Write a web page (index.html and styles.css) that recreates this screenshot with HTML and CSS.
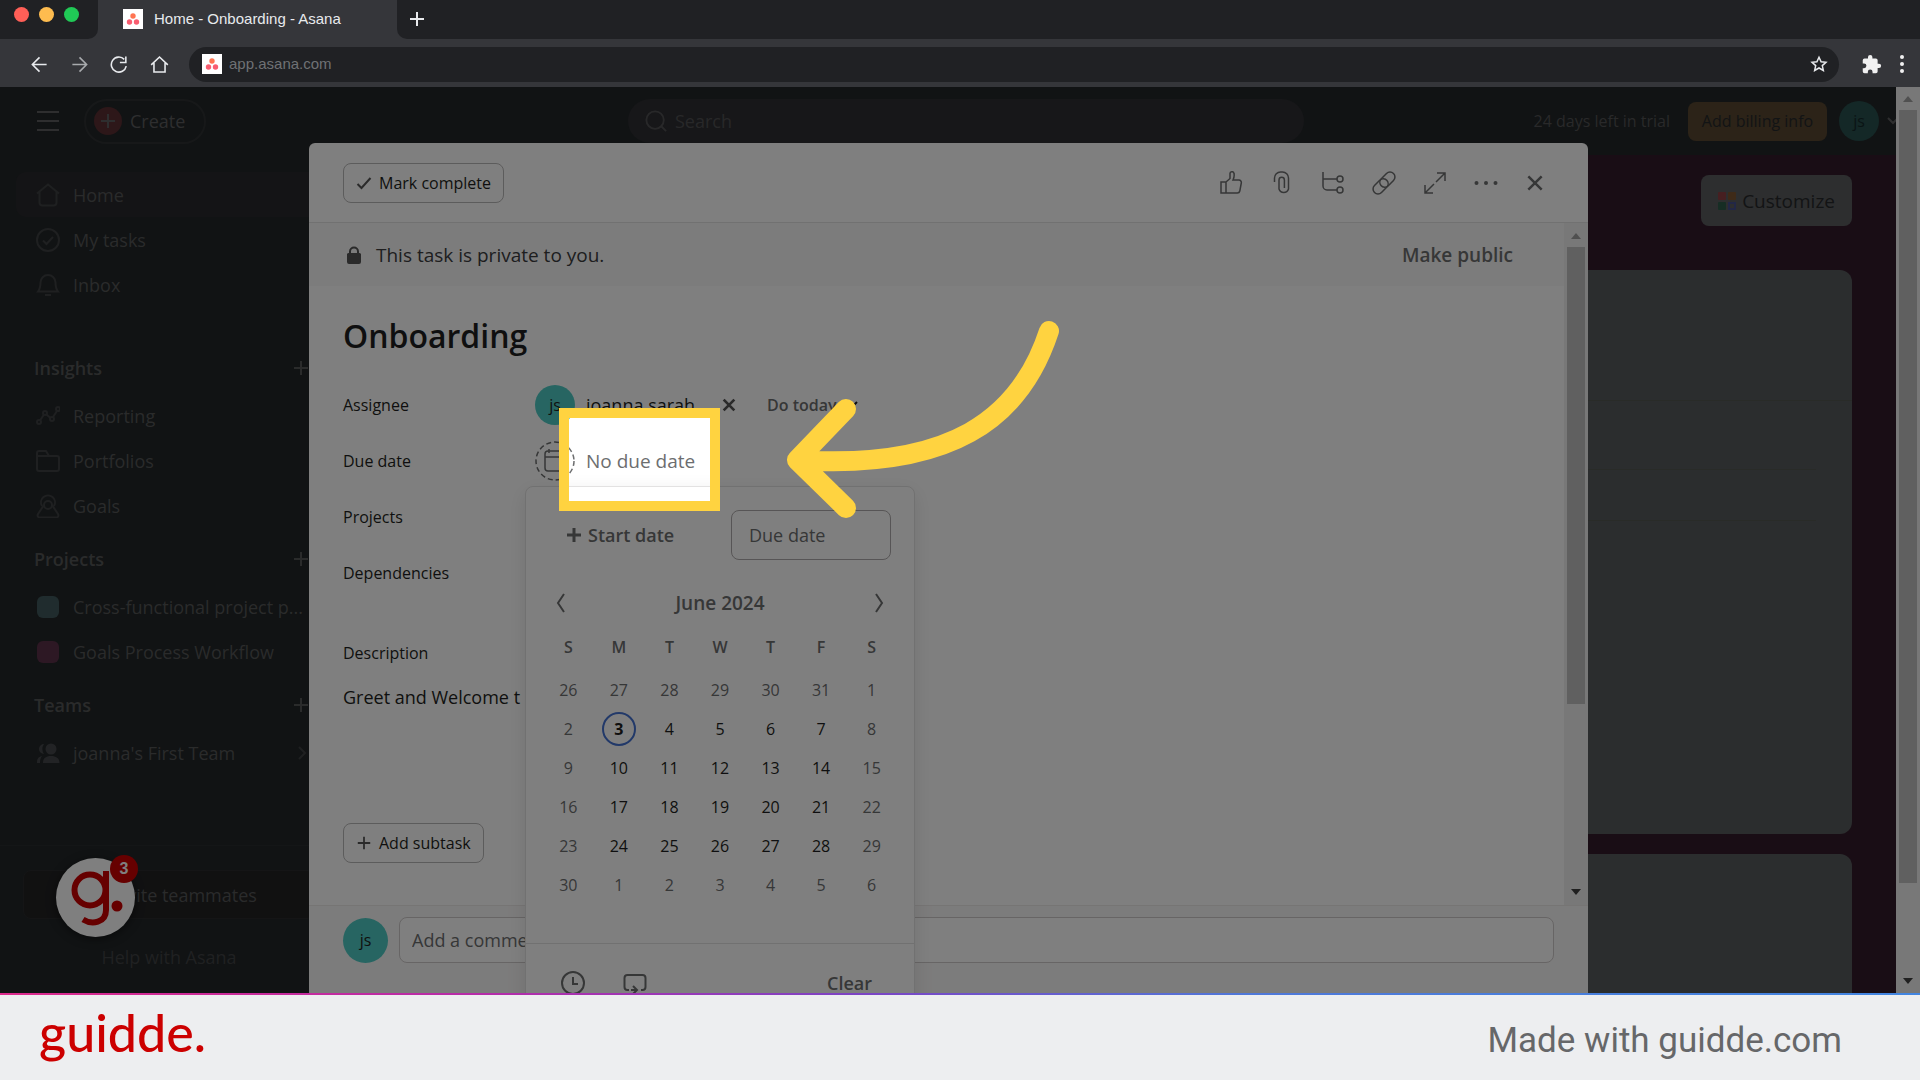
FILE: index.html
```html
<!DOCTYPE html>
<html lang="en">
<head>
  <meta charset="UTF-8">
  <meta name="viewport" content="width=device-width, initial-scale=1.0">
  <title>Home - Onboarding - Asana</title>
  <link rel="stylesheet" href="styles.css">
</head>
<body>
  <svg class="defs" aria-hidden="true">
    <symbol id="asana" viewBox="0 0 20 20">
      <rect width="20" height="20" fill="#fff"/>
      <circle cx="10" cy="7" r="2.7" fill="#ff7452"/>
      <circle cx="6.5" cy="13" r="2.7" fill="#f95d70"/>
      <circle cx="13.5" cy="13" r="2.7" fill="#f95d70"/>
    </symbol>
    <symbol id="plus" viewBox="3 3 18 18"><path d="M12 5v14M5 12h14"/></symbol>
    <symbol id="cross" viewBox="0 0 24 24"><path d="M4 4l16 16M20 4L4 20"/></symbol>
  </svg>

  <div class="tabs">
    <div class="tabs-left"><i class="light red"></i><i class="light yellow"></i><i class="light green"></i></div>
    <div class="tab"><svg class="favicon"><use href="#asana"/></svg><span>Home - Onboarding - Asana</span></div>
    <div class="tabs-right"><svg class="icon new-tab"><use href="#plus"/></svg></div>
  </div>

  <nav class="toolbar">
    <svg class="icon nav" viewBox="0 0 24 24"><path d="M21 12H4M12 3l-9 9 9 9"/></svg>
    <svg class="icon nav forward" viewBox="0 0 24 24"><path d="M3 12h17M12 3l9 9-9 9"/></svg>
    <svg class="icon nav" viewBox="0 0 24 24"><path d="M18 5.500A9.500 9.500 0 1 0 20.500 14M20 2v7.500h-7.500"/></svg>
    <svg class="icon nav" viewBox="0 0 24 24"><path d="M1.500 12.500L12 2.500l10.500 10M5 10v11.500h14V10"/></svg>
    <div class="address">
      <svg class="favicon"><use href="#asana"/></svg>
      <span>app.asana.com</span>
      <svg class="icon star" viewBox="0 0 24 24"><path d="M12 3l2.800 6 6.500.7-4.900 4.400 1.400 6.500L12 17.300l-5.800 3.300 1.400-6.500-4.900-4.400 6.500-.7z"/></svg>
    </div>
    <svg class="puzzle" viewBox="0 0 24 24"><path d="M20.500 11H19V7a2 2 0 0 0-2-2h-4V3.500a2.500 2.500 0 0 0-5 0V5H4a2 2 0 0 0-2 2v3.800h1.500a2.700 2.700 0 0 1 0 5.400H2V20a2 2 0 0 0 2 2h3.800v-1.500a2.700 2.700 0 0 1 5.400 0V22H17a2 2 0 0 0 2-2v-4h1.500a2.500 2.500 0 0 0 0-5z"/></svg>
    <svg class="dots" viewBox="0 0 6 20"><circle cx="3" cy="3" r="2"/><circle cx="3" cy="10" r="2"/><circle cx="3" cy="17" r="2"/></svg>
  </nav>

  <main class="page">
    <div class="app">
      <header class="topbar">
        <svg class="icon menu" viewBox="0 0 24 24"><path d="M1 3h22M1 12h22M1 21h22"/></svg>
        <button class="create"><span class="create-dot"><svg class="icon"><use href="#plus"/></svg></span>Create</button>
        <div class="search">
          <svg class="icon" viewBox="0 0 24 24"><circle cx="11" cy="11" r="9.500"/><path d="M18 18l5 5"/></svg>
          <input type="text" placeholder="Search" aria-label="Search">
        </div>
        <span class="trial">24 days left in trial</span>
        <button class="billing">Add billing info</button>
        <span class="avatar avatar-top">js</span>
        <svg class="icon caret" viewBox="0 0 14 14"><path d="M2 4l5 5 5-5"/></svg>
      </header>

      <div class="columns">
        <nav class="sidebar">
          <a class="item active" href="#"><svg class="icon" viewBox="0 0 24 24"><path d="M1 10.500L12 1.500l11 9M3.500 9v10.500a3 3 0 0 0 3 3h11a3 3 0 0 0 3-3V9"/></svg>Home</a>
          <a class="item" href="#"><svg class="icon" viewBox="0 0 24 24"><circle cx="12" cy="12" r="11"/><path d="M7 12.500l3.500 3.500 6.500-7"/></svg>My tasks</a>
          <a class="item" href="#"><svg class="icon" viewBox="0 0 24 24"><path d="M2 18.500c2-2.500 2.500-5 2.500-9a7.500 7.500 0 0 1 15 0c0 4 .5 6.500 2.500 9zM9 22h6"/></svg>Inbox</a>

          <div class="section first">Insights<svg class="icon add"><use href="#plus"/></svg></div>
          <a class="item" href="#"><svg class="icon" viewBox="0 0 24 24"><circle cx="3" cy="18" r="2"/><circle cx="9" cy="9" r="2"/><circle cx="16" cy="15" r="2"/><circle cx="22" cy="5" r="2"/><path d="M4 16.500l4-6M10.500 10.500l4 3.500M17 13l4-6"/></svg>Reporting</a>
          <a class="item" href="#"><svg class="icon" viewBox="0 0 24 24"><path d="M1 20V4a2 2 0 0 1 2-2h7l3 5h8a2 2 0 0 1 2 2v11a2 2 0 0 1-2 2H3a2 2 0 0 1-2-2zM1 7h12"/></svg>Portfolios</a>
          <a class="item" href="#"><svg class="icon" viewBox="0 0 24 24"><path d="M6 12a7 7 0 1 1 12 0"/><path d="M8 11a4 4 0 0 1 8 0l6 9c1 2 0 3.500-2 3.500H4c-2 0-3-1.500-2-3.500z"/><path d="M8 11a4 4 0 0 0 8 0"/></svg>Goals</a>

          <div class="section">Projects<svg class="icon add"><use href="#plus"/></svg></div>
          <a class="item" href="#"><i class="swatch teal"></i>Cross-functional project p...</a>
          <a class="item" href="#"><i class="swatch pink"></i>Goals Process Workflow</a>

          <div class="section">Teams<svg class="icon add"><use href="#plus"/></svg></div>
          <a class="item" href="#"><svg class="people" viewBox="0 0 24 24"><circle cx="15" cy="8" r="5.500"/><path d="M7 22c0-5 3-7 8-7s8.500 2 8.500 7zM8 3a5 5 0 0 0 0 10 9 9 0 0 1 0-10zM1 22c0-4 1-6 5-7-1.500 2-2 4-2 7z"/></svg>joanna's First Team<svg class="icon arrow" viewBox="0 0 14 14"><path d="M4 1l6 6-6 6"/></svg></a>

          <div class="sidebar-foot">
            <button class="invite"><svg class="icon" viewBox="0 0 24 24"><circle cx="12" cy="7" r="5"/><path d="M3 22c0-6 4-8 9-8s9 2 9 8"/></svg>Invite teammates</button>
            <a class="help" href="#">Help with Asana</a>
          </div>
        </nav>

        <section class="home">
          <button class="customize">
            <svg viewBox="0 0 18 18"><rect width="8" height="8" rx="1" fill="#8c3e42"/><rect x="10" width="8" height="8" rx="1" fill="#7d5530"/><rect y="10" width="8" height="8" rx="1" fill="#2d5a48"/><rect x="11" y="11" width="6" height="6" fill="none" stroke="#454f8c" stroke-width="2"/></svg>
            Customize
          </button>
          <div class="card"><hr class="wide"><hr><hr></div>
          <div class="card last"></div>
        </section>
      </div>
    </div>

    <div class="scrollbar page-scroll">
      <svg class="up" viewBox="0 0 10 6"><path d="M0 6l5-6 5 6z"/></svg>
      <i class="thumb"></i>
      <svg class="down" viewBox="0 0 10 6"><path d="M0 0l5 6 5-6z"/></svg>
    </div>

    <div class="modal" role="dialog" aria-label="Onboarding">
      <header class="modal-head">
        <button class="outline"><svg class="icon" viewBox="0 0 16 16"><path d="M1.500 9l4 4 9-10"/></svg>Mark complete</button>
        <div class="actions">
          <svg class="icon" viewBox="0 0 24 24"><path d="M2 11h5v11H2zM7 11l4-3.500V3a2 2 0 0 1 4-.5c.5 2.500 0 4.500-1 6.500h6a2.500 2.500 0 0 1 2.300 3L20.800 20a2.500 2.500 0 0 1-2.500 2H7"/></svg>
          <svg class="icon" viewBox="0 0 24 24"><path d="M4.500 11V7a6 6 0 0 1 6-6h2a6 6 0 0 1 6 6v11a5 5 0 0 1-9.500 0V9a2.700 2.700 0 0 1 5.400 0v8"/></svg>
          <svg class="icon" viewBox="0 0 24 24"><path d="M2 1v14a4 4 0 0 0 4 4h10M2 8h14"/><circle cx="19" cy="8" r="3"/><circle cx="19" cy="19" r="3"/></svg>
          <svg class="icon" viewBox="0 0 24 24"><path d="M9 14.500a5 5 0 0 1 .3-6.700l5.200-5.300a4.900 4.900 0 0 1 7 7l-5.200 5.300a4.800 4.800 0 0 1-7.300-.3"/><path d="M15 9.500a5 5 0 0 1-.3 6.700l-5.200 5.300a4.900 4.900 0 0 1-7-7l5.200-5.300a4.800 4.800 0 0 1 7.300.3"/></svg>
          <svg class="icon" viewBox="0 0 24 24"><path d="M14 2h8v8M22 2l-9 9M10 22H2v-8M2 22l9-9"/></svg>
          <svg class="more" viewBox="0 0 24 24"><circle cx="2.500" cy="12" r="2"/><circle cx="12" cy="12" r="2"/><circle cx="21.500" cy="12" r="2"/></svg>
          <svg class="icon close"><use href="#cross"/></svg>
        </div>
      </header>

      <div class="modal-body">
        <div class="content">
          <div class="banner">
            <svg class="lock" viewBox="0 0 16 18"><path d="M1 8a2 2 0 0 1 2-1V5.500a5 5 0 0 1 10 0V7a2 2 0 0 1 2 1v8a2 2 0 0 1-2 2H3a2 2 0 0 1-2-2zM5 7h6V5.500a3 3 0 0 0-6 0z"/></svg>
            <span>This task is private to you.</span>
            <a href="#">Make public</a>
          </div>
          <div class="details">
            <h1>Onboarding</h1>
            <div class="field"><span class="name">Assignee</span><span class="avatar">js</span><span class="value">joanna sarah</span><svg class="icon remove"><use href="#cross"/></svg><span class="today">Do today</span><svg class="icon today-caret" viewBox="0 0 14 14"><path d="M2 4l5 5 5-5"/></svg></div>
            <div class="field">
              <span class="name">Due date</span>
              <svg class="date-icon" viewBox="0 0 40 40"><circle cx="20" cy="20" r="19" stroke-dasharray="5 3"/><rect x="10" y="10" width="20" height="20" rx="3"/><path d="M10 16h20M14 8v4M26 8v4"/></svg>
              <span class="value muted">No due date</span>
            </div>
            <div class="field"><span class="name">Projects</span></div>
            <div class="field"><span class="name">Dependencies</span></div>
            <div class="name description">Description</div>
            <p>Greet and Welcome t</p>
            <button class="outline"><svg class="icon"><use href="#plus"/></svg>Add subtask</button>
          </div>
        </div>
        <div class="scrollbar body-scroll">
          <svg class="up" viewBox="0 0 10 6"><path d="M0 6l5-6 5 6z"/></svg>
          <i class="thumb"></i>
          <svg class="down" viewBox="0 0 10 6"><path d="M0 0l5 6 5-6z"/></svg>
        </div>
      </div>

      <footer class="comment">
        <span class="avatar">js</span>
        <input type="text" placeholder="Add a comment" aria-label="Add a comment">
      </footer>

      <div class="popover">
        <div class="dates">
          <button class="start"><svg class="icon"><use href="#plus"/></svg>Start date</button>
          <input type="text" placeholder="Due date" aria-label="Due date">
        </div>
        <div class="month">
          <svg class="icon" viewBox="0 0 24 24"><path d="M15 3l-6 9 6 9"/></svg>
          <span>June 2024</span>
          <svg class="icon" viewBox="0 0 24 24"><path d="M9 3l6 9-6 9"/></svg>
        </div>
        <table>
          <thead>
            <tr><th>S</th><th>M</th><th>T</th><th>W</th><th>T</th><th>F</th><th>S</th></tr>
          </thead>
          <tbody>
            <tr class="other"><td>26</td><td>27</td><td>28</td><td>29</td><td>30</td><td>31</td><td>1</td></tr>
            <tr><td>2</td><td><span class="now">3</span></td><td>4</td><td>5</td><td>6</td><td>7</td><td>8</td></tr>
            <tr><td>9</td><td>10</td><td>11</td><td>12</td><td>13</td><td>14</td><td>15</td></tr>
            <tr><td>16</td><td>17</td><td>18</td><td>19</td><td>20</td><td>21</td><td>22</td></tr>
            <tr><td>23</td><td>24</td><td>25</td><td>26</td><td>27</td><td>28</td><td>29</td></tr>
            <tr class="other"><td>30</td><td>1</td><td>2</td><td>3</td><td>4</td><td>5</td><td>6</td></tr>
          </tbody>
        </table>
        <div class="popover-foot">
          <svg class="icon" viewBox="0 0 24 24"><circle cx="12" cy="12" r="11"/><path d="M12 6v7h5"/></svg>
          <svg class="icon" viewBox="0 0 24 24"><path d="M6 19H4.500a3 3 0 0 1-3-3V7a3 3 0 0 1 3-3h15a3 3 0 0 1 3 3v9a3 3 0 0 1-3 3H18M8 19h5M10 15l4 4-4 4"/></svg>
          <button class="clear">Clear</button>
        </div>
      </div>
    </div>

    <div class="launcher">
      <svg viewBox="0 0 79 79"><circle cx="34" cy="32" r="15.500"/><path d="M50 13v39c0 13-14 15-23 9.500"/><circle class="dot" cx="61" cy="48" r="5.500"/></svg>
      <span class="count">3</span>
    </div>

    <!-- dims everything but the highlighted field -->
    <div class="spotlight"></div>
    <svg class="pointer" viewBox="0 0 290 210"><path d="M20 149C173 159 243 109 272 20M69 98L20 149l49 48"/></svg>
  </main>

  <footer class="brand">
    <a class="wordmark" href="#">guidde.</a>
    <span class="made">Made with guidde.com</span>
  </footer>
</body>
</html>
```

FILE: styles.css
```css
* { box-sizing: border-box; }
body { margin: 0; height: 100vh; display: flex; flex-direction: column; overflow: hidden; font-family: "Open Sans", "Noto Sans", sans-serif; font-size: 18px; line-height: 24px; background: #35363a; }
a { color: inherit; text-decoration: none; }
button { font: inherit; color: inherit; border: 0; background: none; padding: 0; }
input { font: inherit; color: inherit; border: 0; background: none; padding: 0; min-width: 0; outline: 0; }
svg { flex: none; display: block; }
.defs { position: absolute; width: 0; height: 0; }
.icon { fill: none; stroke: currentColor; stroke-width: 2; width: 24px; height: 24px; }

/* browser window */
.tabs { display: flex; height: 39px; flex: none; font: 15px/38px "Liberation Sans", Arial, sans-serif; color: #e8eaed; }
.tabs-left { display: flex; gap: 10px; width: 98px; padding: 7px 0 0 14px; background: #202124; border-bottom-right-radius: 10px; }
.light { width: 15px; height: 15px; border-radius: 50%; }
.red { background: #ff5f57; }
.yellow { background: #febc4f; }
.green { background: #20c956; }
.tab { display: flex; align-items: center; gap: 11px; width: 299px; padding: 0 0 2px 25px; }
.favicon { width: 20px; height: 20px; }
.tabs-right { flex: 1; background: #202124; border-bottom-left-radius: 10px; padding: 10px 0 0 11px; }
.new-tab { width: 18px; height: 18px; }
.toolbar { display: flex; align-items: center; height: 48px; flex: none; padding: 2px 15px 0 30px; color: #e8eaed; font: 15px/20px "Liberation Sans", Arial, sans-serif; }
.nav { width: 19px; height: 19px; margin-right: 21px; }
.forward { color: #a8aaad; }
.address { display: flex; align-items: center; flex: 1; height: 35px; margin: 0 22px 0 -1px; padding: 0 11px 0 13px; border-radius: 18px; background: #202124; }
.address span { flex: 1; margin-left: 7px; color: #6f7174; }
.star { width: 18px; height: 18px; }
.puzzle { width: 21px; height: 21px; fill: #f1f1f1; }
.dots { width: 6px; height: 20px; margin-left: 17px; fill: #f1f1f1; }

/* asana */
.page { position: relative; display: flex; flex: 1; min-height: 0; overflow: hidden; border-bottom: 2px solid; border-image: linear-gradient(90deg, #dd2a8c, #b62ba8 25%, #7b44c4 45%, #4f78d8 65%, #4285e0) 1; }
.app { flex: 1; min-width: 0; display: flex; flex-direction: column; background: #222628; color: #555657; }
.topbar { display: flex; align-items: center; height: 68px; flex: none; padding-left: 36px; color: #5c5d5e; }
.menu { margin-right: 24px; }
.create { display: flex; align-items: center; gap: 8px; height: 45px; width: 122px; padding-left: 8px; border: 2px solid #2e3133; border-radius: 23px; }
.create-dot { display: flex; align-items: center; justify-content: center; width: 28px; height: 28px; border-radius: 50%; background: #5a2e32; }
.create-dot .icon { width: 18px; height: 18px; }
.search { display: flex; align-items: center; gap: 8px; flex: 1; height: 44px; margin: 0 230px 0 422px; padding-left: 17px; border-radius: 22px; background: #2e2e32; color: #515153; }
.search .icon { width: 22px; height: 22px; }
.search input { flex: 1; }
::placeholder { color: inherit; opacity: 1; }
.trial { font-size: 16px; color: #525354; white-space: nowrap; }
.billing { height: 39px; width: 139px; margin-left: 18px; border-radius: 8px; background: #584630; color: #25282a; font-size: 16px; }
.avatar { display: flex; align-items: center; justify-content: center; flex: none; width: 40px; height: 40px; border-radius: 50%; background: #4ecbc4; color: #1e1f21; font-size: 16px; }
.avatar-top { margin-left: 12px; background: #28504e; color: #15292a; }
.caret { width: 14px; height: 14px; margin-left: 7px; margin-right: -4px; }
.columns { display: flex; flex: 1; min-height: 0; }
.sidebar { display: flex; flex-direction: column; width: 338px; flex: none; padding-top: 17px; }
.item { display: flex; align-items: center; gap: 13px; height: 45px; margin: 0 16px; padding-left: 20px; border-radius: 10px; font-weight: 500; white-space: nowrap; }
.item .icon { color: #3e4042; }
.active { background: #29292c; }
.people { width: 24px; height: 24px; fill: #45474a; }
.item .arrow { width: 14px; height: 14px; margin-left: auto; margin-right: 13px; }
.section { display: flex; align-items: center; justify-content: space-between; height: 45px; margin: 8px 0 3px; padding: 0 28px 0 34px; font-weight: 600; }
.first { margin-top: 38px; }
.add { width: 18px; height: 18px; }
.swatch { width: 22px; height: 22px; margin: 0 1px; border-radius: 6px; }
.teal { background: #40595c; }
.pink { background: #5a3049; }
.sidebar-foot { margin-top: auto; padding: 24px 23px; border-top: 1px solid #292c2e; text-align: center; }
.invite { display: flex; align-items: center; justify-content: center; gap: 12px; width: 100%; height: 49px; margin-bottom: 26px; border: 1px solid #2a2b2d; border-radius: 8px; background: #222223; font-weight: 500; }
.invite .icon { width: 18px; height: 18px; }
.help { color: #404244; }
.home { display: flex; flex-direction: column; flex: 1; padding: 20px 44px 0; background: #321b2b; }
.customize { display: flex; align-items: center; align-self: flex-end; gap: 6px; height: 51px; padding: 0 17px; border-radius: 8px; background: #5a5c5e; color: #26282a; font-size: 19px; flex: none; }
.customize svg { width: 18px; height: 18px; }
.card { height: 564px; flex: none; margin-top: 44px; padding-top: 130px; border-radius: 12px; background: #575a5c; }
.card hr { border: 0; border-top: 1px solid #535650; margin: 0 36px 50px; }
.card .wide { margin: 0 0 68px; }
.last { flex: 1; margin-top: 20px; border-radius: 12px 12px 0 0; }

.scrollbar { display: flex; flex-direction: column; align-items: center; width: 24px; flex: none; background: #f1f1f1; }
.scrollbar svg { width: 10px; height: 6px; }
.up { fill: #a0a0a0; }
.down { fill: #404040; margin-top: auto; }
.thumb { width: 18px; background: #c1c1c1; }
.page-scroll { padding: 9px 0; }
.page-scroll .thumb { height: 87%; margin-top: 8px; }
.body-scroll { padding: 10px 0; }
.body-scroll .thumb { height: 69%; margin-top: 8px; }

/* task dialog */
.modal { position: absolute; top: 56px; right: 332px; bottom: 0; left: 309px; display: flex; flex-direction: column; border-radius: 6px 6px 0 0; background: #fff; color: #1e1f21; }
.modal-head { display: flex; align-items: center; justify-content: space-between; height: 80px; flex: none; padding: 0 41px 0 34px; border-bottom: 1px solid #e3e2e2; }
.outline { display: flex; align-items: center; gap: 7px; height: 40px; padding: 0 12px; border: 1px solid #b9b8b8; border-radius: 8px; font-size: 16px; }
.outline .icon { width: 16px; height: 16px; color: #555; }
.actions { display: flex; align-items: center; gap: 27px; color: #6d6e6f; }
.actions .icon { stroke-width: 1.5; }
.actions .close { width: 20px; height: 20px; margin: 0 2px 0 0; stroke-width: 3; }
.more { width: 24px; height: 24px; fill: #6d6e6f; }
.modal-body { display: flex; flex: 1; min-height: 0; }
.content { flex: 1; overflow: hidden; }
.banner { display: flex; align-items: center; gap: 14px; height: 63px; padding: 0 51px 0 37px; background: #f9f8f8; font-size: 19px; }
.banner span { color: #3c3d3f; }
.banner a { margin-left: auto; color: #6d6e6f; font-weight: 600; }
.lock { width: 16px; height: 18px; fill: #555; fill-rule: evenodd; }
.details { padding: 28px 34px; }
h1 { margin: 0 0 19px; font-size: 32px; line-height: 44px; font-weight: 600; }
.field { display: flex; align-items: center; height: 56px; }
.name { width: 192px; font-size: 16px; }
.value { margin-left: 11px; }
.muted { color: #6d6e6f; font-size: 19px; }
.remove { width: 16px; height: 16px; margin: 0 30px 0 26px; stroke-width: 4; color: #555; }
.today { font-size: 16px; font-weight: 600; color: #6d6e6f; }
.today-caret { width: 14px; height: 14px; margin-left: 8px; }
.date-icon { width: 40px; height: 40px; fill: none; stroke: #6d6e6f; stroke-width: 1.5; }
.description { margin-top: 40px; }
.details p { margin: 20px 0 114px; }
.comment { display: flex; align-items: center; gap: 11px; height: 88px; flex: none; padding: 6px 34px 25px; border-top: 1px solid #edeae9; background: #f9f8f8; }
.comment .avatar { width: 45px; height: 45px; }
.comment input { flex: 1; height: 46px; padding: 0 12px; border: 1px solid #cfcbcb; border-radius: 8px; background: #fff; color: #6d6e6f; }

.popover { position: absolute; top: 343px; left: 216px; width: 390px; height: 540px; border: 1px solid #e3e2e2; border-radius: 8px; background: #fff; box-shadow: 0 6px 20px rgba(0, 0, 0, 0.1); }
.dates { display: flex; align-items: center; justify-content: space-between; padding: 23px 23px 27px 39px; }
.start { display: flex; align-items: center; gap: 5px; color: #6d6e6f; font-weight: 600; }
.start .icon { width: 18px; height: 18px; stroke-width: 3; }
.dates input { width: 160px; height: 50px; padding: 0 17px; border: 1px solid #afabac; border-radius: 8px; color: #6d6e6f; }
.month { display: flex; align-items: center; justify-content: space-between; height: 32px; margin-bottom: 5px; padding: 0 23px; color: #6d6e6f; font-size: 19px; font-weight: 600; }
table { width: 354px; margin: 0 auto; table-layout: fixed; border-collapse: collapse; font-size: 16px; text-align: center; }
th { height: 46px; padding: 0; color: #6d6e6f; font-weight: 600; }
td { height: 39px; padding: 0; }
td:first-child, td:last-child, .other td { color: #6d6e6f; }
.now { display: inline-block; width: 34px; height: 34px; border: 2px solid #4573d2; border-radius: 50%; line-height: 30px; font-weight: 700; }
.popover-foot { display: flex; align-items: center; gap: 38px; margin-top: 39px; padding: 27px 42px 27px 35px; border-top: 1px solid #e3e2e2; color: #6d6e6f; }
.clear { margin-left: auto; font-weight: 600; }

/* guidde overlay */
.launcher { position: absolute; left: 56px; bottom: 56px; width: 79px; height: 79px; border-radius: 50%; background: #fff; box-shadow: 0 2px 10px rgba(0, 0, 0, 0.5); }
.launcher svg { width: 79px; height: 79px; fill: none; stroke: #c00; stroke-width: 6; }
.launcher .dot { fill: #c00; stroke: none; }
.count { position: absolute; top: -3px; right: -3px; width: 28px; height: 28px; border-radius: 50%; background: #c00; color: #fff; font: bold 16px/28px "Liberation Sans", Arial, sans-serif; text-align: center; }
.spotlight { position: absolute; top: 321px; left: 559px; width: 161px; height: 103px; border: 10px solid #ffd340; box-shadow: 0 0 0 4000px rgba(0, 0, 0, 0.5); }
.pointer { position: absolute; top: 224px; left: 777px; width: 290px; height: 210px; fill: none; stroke: #ffd340; stroke-width: 20; stroke-linecap: round; stroke-linejoin: round; }

.brand { display: flex; align-items: center; justify-content: space-between; height: 85px; flex: none; padding: 0 78px 0 39px; background: #edeef0; color: #666769; font: 35px/48px Roboto, sans-serif; }
.made { padding-top: 6px; }
.wordmark { color: #c00; font: 500 52px/60px Lato, sans-serif; padding-bottom: 12px; }
```
